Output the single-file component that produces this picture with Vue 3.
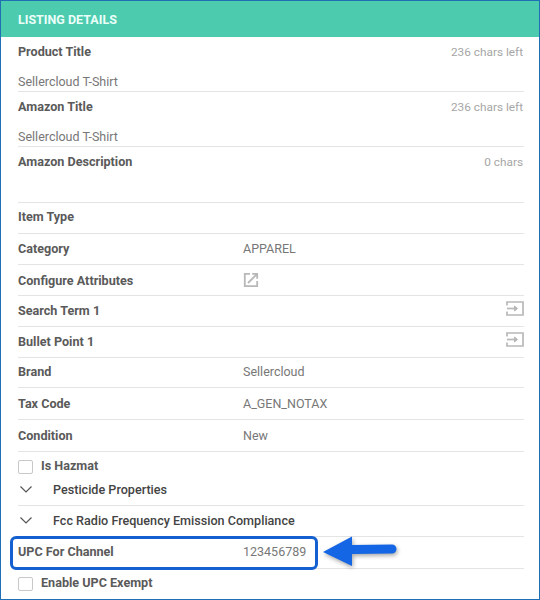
<script setup>
const titled = [
  { label: 'Product Title', note: '236 chars left', value: 'Sellercloud T-Shirt' },
  { label: 'Amazon Title', note: '236 chars left', value: 'Sellercloud T-Shirt' },
]
const rowsA = [
  { label: 'Item Type', value: '', cls: 'lift-4' },
  { label: 'Category', value: 'APPAREL', cls: 'lift-2' },
]
const rowsB = [
  { label: 'Brand', value: 'Sellercloud', cls: 'brand lift-2' },
  { label: 'Tax Code', value: 'A_GEN_NOTAX', cls: 'tall' },
  { label: 'Condition', value: 'New', cls: 'tall' },
]
const search = ['Search Term 1', 'Bullet Point 1']
</script>

<template>
  <div class="panel">
    <div class="head">LISTING DETAILS</div>
    <div class="body">
      <div v-for="t in titled" :key="t.label" class="titled">
        <div class="titled-top"><span class="label">{{ t.label }}</span><span class="note">{{ t.note }}</span></div>
        <div class="value">{{ t.value }}</div>
      </div>
      <div class="titled desc">
        <div class="titled-top"><span class="label">Amazon Description</span><span class="note">0 chars</span></div>
      </div>
      <div v-for="r in rowsA" :key="r.label" class="row attr" :class="r.cls">
        <span class="label col">{{ r.label }}</span><span class="value">{{ r.value }}</span>
      </div>
      <div class="row attr">
        <span class="label col">Configure Attributes</span>
        <svg class="open" width="16" height="16" viewBox="0 0 16 16" fill="none" stroke="#b8b8b8" stroke-width="1.8">
          <path d="M7 1.800H1.800v12.400h12.400V9" />
          <path d="M5 11 14 2M9.200 1.800h5v5" />
        </svg>
      </div>
      <div v-for="s in search" :key="s" class="row attr spread lift-2">
        <span class="label col">{{ s }}</span>
        <svg class="exit" width="18" height="15" viewBox="0 0 18 15" fill="none" stroke="#b8b8b8" stroke-width="1.700">
          <path d="M1 4.500V1h16v13H1v-3.500" />
          <path d="M1 7.500h9.500" />
          <path d="M8.500 5 11.500 7.500 8.500 10Z" fill="#b8b8b8" stroke-width="1" />
        </svg>
      </div>
      <div v-for="r in rowsB" :key="r.label" class="row" :class="r.cls">
        <span class="label col">{{ r.label }}</span><span class="value">{{ r.value }}</span>
      </div>
      <div class="check hazmat"><span class="box"></span><span class="label">Is Hazmat</span></div>
      <div class="fold pest">
        <svg width="12" height="7" viewBox="0 0 12 7" fill="none" stroke="#555" stroke-width="1.200"><path d="M0.500 0.500 6 6 11.500 0.500" /></svg>
        <span>Pesticide Properties</span>
      </div>
      <div class="fold fcc">
        <svg width="12" height="7" viewBox="0 0 12 7" fill="none" stroke="#555" stroke-width="1.200"><path d="M0.500 0.500 6 6 11.500 0.500" /></svg>
        <span>Fcc Radio Frequency Emission Compliance</span>
      </div>
      <div class="row upc">
        <span class="label col">UPC For Channel</span><span class="value">123456789</span>
        <div class="highlight"></div>
        <svg class="arrow" width="80" height="34" viewBox="0 0 80 34">
          <path d="M3 16 32 0.500V9L72 8.500a4.500 4.500 0 0 1 0 9L32 18V30Z" fill="#1466e4" />
        </svg>
      </div>
      <div class="check exempt"><span class="box"></span><span class="label">Enable UPC Exempt</span></div>
    </div>
  </div>
</template>

<style scoped>
.panel {
  width: 540px;
  height: 600px;
  box-sizing: border-box;
  border: 1px solid #1f6fb5;
  background: #fff;
  overflow: hidden;
  font-family: Roboto, "Liberation Sans", sans-serif;
  font-size: 12.600px;
}
.head {
  height: 36px;
  background: #4dcbae;
  color: #eafff9;
  font-weight: 700;
  font-size: 12.500px;
  line-height: 38px;
  padding-left: 17px;
}
.body {
  padding: 0 15px 0 17px;
}
.label {
  font-weight: 700;
  color: #5a5a5a;
}
.value {
  color: #777;
  font-size: 12.500px;
}
.note {
  color: #a6a6a6;
  font-size: 11.800px;
  padding-right: 1px;
}
.titled {
  height: 54px;
  border-bottom: 1px solid #e4e4e4;
  display: flex;
  flex-direction: column;
  justify-content: space-between;
}
.titled-top {
  display: flex;
  justify-content: space-between;
  padding-top: 7px;
  line-height: 16px;
}
.titled .value {
  line-height: 17px;
  padding-bottom: 1px;
}
.desc {
  height: 55px;
}
.row {
  display: flex;
  align-items: center;
  box-sizing: border-box;
  border-bottom: 1px solid #e4e4e4;
  position: relative;
}
.col {
  width: 225px;
  flex: none;
}
.attr {
  height: 31px;
}
.brand {
  height: 30px;
}
.tall {
  height: 32px;
}
.lift-2 {
  padding-bottom: 2px;
}
.lift-4 {
  padding-bottom: 4px;
}
.spread {
  justify-content: space-between;
}
.open {
  display: block;
}
.exit {
  display: block;
  margin-bottom: 3px;
}
.check {
  display: flex;
  align-items: center;
  gap: 8px;
  padding-bottom: 2px;
}
.box {
  width: 13px;
  height: 12px;
  margin-top: 3px;
  border: 1px solid #c8c8c8;
  border-radius: 2px;
  background: #fff;
}
.hazmat {
  height: 27px;
}
.fold {
  display: flex;
  align-items: center;
  gap: 21px;
  padding-left: 2px;
  color: #444;
  font-weight: 500;
  border-bottom: 1px solid #e4e4e4;
}
.pest {
  height: 16px;
  padding-bottom: 8px;
}
.fcc {
  height: 28px;
  padding-bottom: 2px;
}
.upc {
  height: 32px;
  padding-bottom: 3px;
}
.highlight {
  position: absolute;
  left: -8px;
  top: -1px;
  width: 308px;
  height: 34px;
  box-sizing: border-box;
  border: 3px solid #1560d0;
  border-radius: 6px;
}
.arrow {
  position: absolute;
  left: 302px;
  top: -1px;
  filter: drop-shadow(1px 2px 2px rgba(0, 0, 0, 0.35));
}
.exempt {
  height: 26px;
  padding-bottom: 3px;
}
</style>
